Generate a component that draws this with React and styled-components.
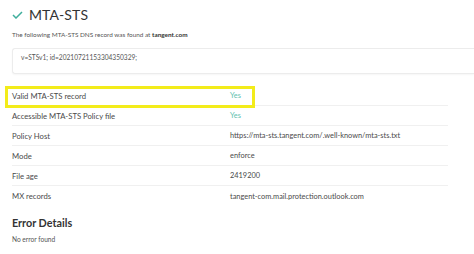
import React from "react";
import styled, { createGlobalStyle } from "styled-components";

const GlobalStyle = createGlobalStyle`
  body {
    margin: 0;
    background: #ffffff;
    font-family: "Lato", "Open Sans", sans-serif;
    color: #444;
  }
`;

const rows = [
  { label: "Valid MTA-STS record", value: "Yes", ok: true, highlighted: true },
  { label: "Accessible MTA-STS Policy file", value: "Yes", ok: true },
  { label: "Policy Host", value: "https://mta-sts.tangent.com/.well-known/mta-sts.txt" },
  { label: "Mode", value: "enforce" },
  { label: "File age", value: "2419200" },
  { label: "MX records", value: "tangent-com.mail.protection.outlook.com", last: true },
];

const App = () => {
  return (
    <Page>
      <GlobalStyle />
      <Header>
        <svg width="11" height="8" viewBox="0 0 11 8">
          <polyline points="1,4 4,7 10,1" fill="none" stroke="#3fae9c" strokeWidth="1.5" />
        </svg>
        <Title>MTA-STS</Title>
      </Header>
      <Intro>
        The following MTA-STS DNS record was found at <b>tangent.com</b>
      </Intro>
      <RecordBox>v=STSv1; id=20210721153304350329;</RecordBox>
      <Table>
        {rows.map((r) => (
          <Row key={r.label} $highlighted={r.highlighted} $last={r.last}>
            <Label>{r.label}</Label>
            <Value $ok={r.ok}>{r.value}</Value>
          </Row>
        ))}
      </Table>
      <SectionTitle>Error Details</SectionTitle>
      <Note>No error found</Note>
    </Page>
  );
};

export default App;

const Page = styled.div`
  padding: 3px 0 0 12px;
`;

const Header = styled.div`
  display: flex;
  align-items: center;
  gap: 6px;
  height: 22px;
  svg {
    margin-top: 1px;
  }
`;

const Title = styled.div`
  font-size: 14px;
  color: #333;
  letter-spacing: 0.1px;
`;

const Intro = styled.div`
  font-size: 6.4px;
  color: #555;
  margin-top: 5px;
  height: 10px;
  line-height: 10px;
  b {
    color: #333;
  }
`;

const RecordBox = styled.div`
  margin-top: 8px;
  height: 26px;
  border: 1px solid #ececec;
  border-right: none;
  border-radius: 3px 0 0 3px;
  box-shadow: 0 1px 2px rgba(0, 0, 0, 0.04);
  box-sizing: border-box;
  padding: 4px 8px;
  font-size: 6.6px;
  color: #555;
`;

const Table = styled.div`
  width: 436px;
  margin-top: 12px;
`;

const Row = styled.div`
  position: relative;
  display: grid;
  grid-template-columns: 218px 1fr;
  align-items: center;
  height: 20px;
  box-sizing: border-box;
  border-bottom: ${(p) => (p.$last ? "none" : "1px solid #f0f0f0")};
  &::after {
    content: "";
    display: ${(p) => (p.$highlighted ? "block" : "none")};
    position: absolute;
    left: -7px;
    top: 0;
    width: 250px;
    height: 22px;
    border: 3px solid #f3ec1a;
    box-sizing: border-box;
  }
`;

const Label = styled.div`
  font-size: 7.7px;
  color: #4a4a4a;
`;

const Value = styled.div`
  font-size: 7.4px;
  color: ${(p) => (p.$ok ? "#5fbfae" : "#4a4a4a")};
`;

const SectionTitle = styled.div`
  margin-top: 9px;
  font-size: 10.8px;
  font-weight: 700;
  color: #333;
  height: 16px;
  line-height: 16px;
`;

const Note = styled.div`
  margin-top: 4px;
  font-size: 6.6px;
  color: #555;
`;
